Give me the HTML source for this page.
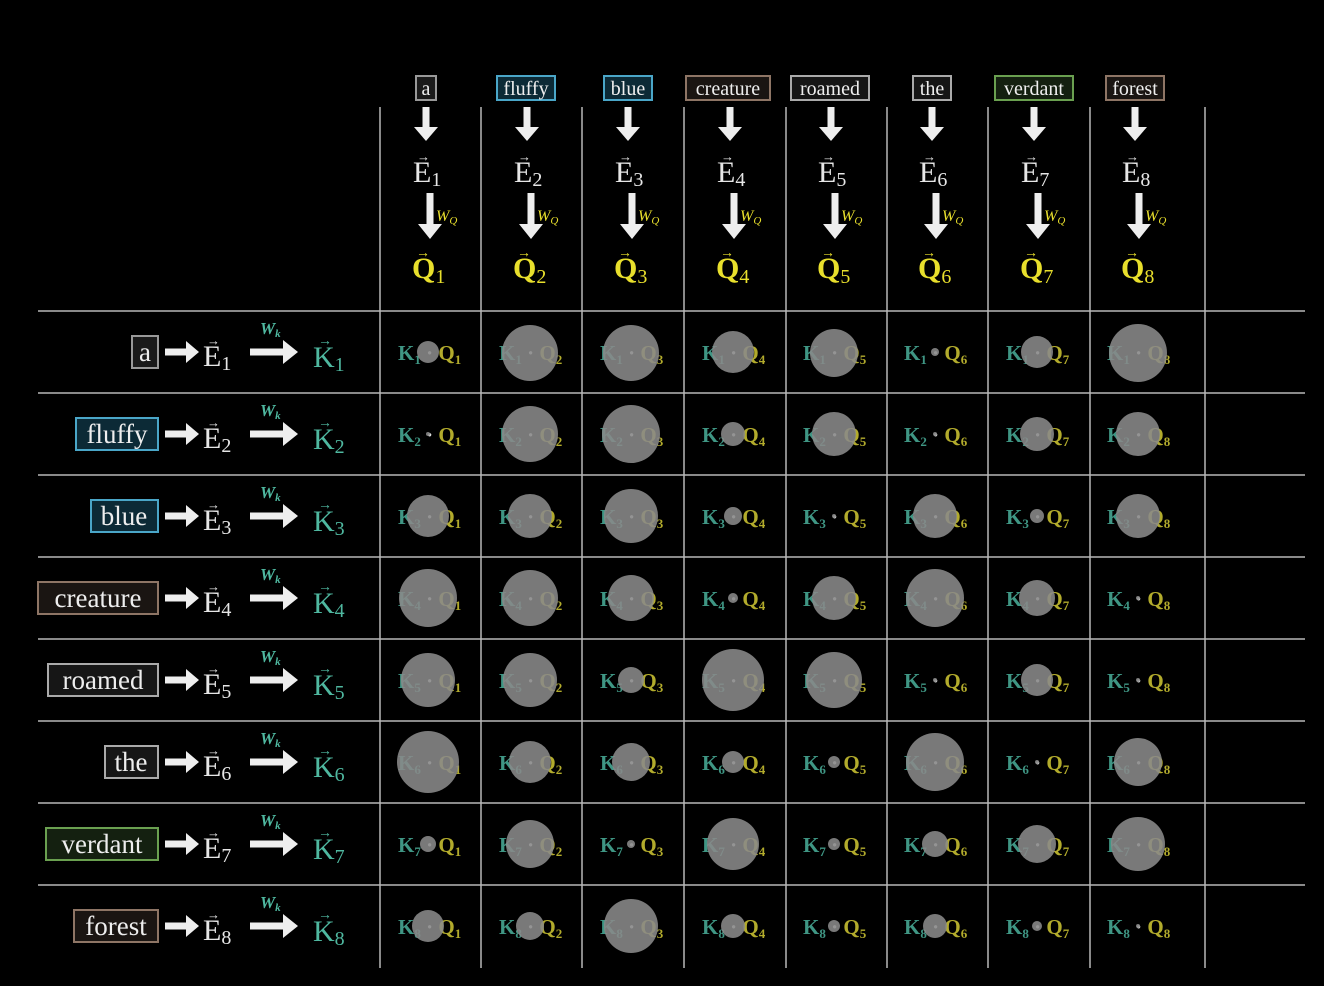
<!DOCTYPE html>
<html><head><meta charset="utf-8"><style>
html,body{margin:0;padding:0;background:#000;}
svg{display:block}
text{font-family:"Liberation Serif",serif;}
.w{fill:#e6e6e6}.y{fill:#e8df2c}.t{fill:#4fb8a0}
.ct{font-size:21px}.ct .k{fill:#3f9684}.ct .q{fill:#b2ab2c}.ct .d{fill:#ddd}
.s{font-size:13px}
.c{fill:#8a8a8a;fill-opacity:.88}
.box{font-size:20px;fill:#eee}
.bw{font-size:27px;fill:#eee}
</style></head><body>
<svg width="1324" height="986" viewBox="0 0 1324 986" xmlns="http://www.w3.org/2000/svg">
<defs>
<path id="da" d="M-3.5 0H3.5V20H12L0 34L-12 20H-3.5Z" fill="#eee"/>
<path id="dl" d="M-3.5 0H3.5V31H12L0 46L-12 31H-3.5Z" fill="#eee"/>
<path id="ra" d="M0 -3.5H21V-11L34 0L21 11V3.5H0Z" fill="#eee"/>
<path id="rl" d="M0 -3.5H33V-12L48 0L33 12V3.5H0Z" fill="#eee"/>
</defs>
<g stroke="#b8b8b8" stroke-width="1.5">
<line x1="380" y1="107" x2="380" y2="968"/><line x1="481" y1="107" x2="481" y2="968"/><line x1="582" y1="107" x2="582" y2="968"/><line x1="684" y1="107" x2="684" y2="968"/><line x1="786" y1="107" x2="786" y2="968"/><line x1="887" y1="107" x2="887" y2="968"/><line x1="988" y1="107" x2="988" y2="968"/><line x1="1090" y1="107" x2="1090" y2="968"/><line x1="1205" y1="107" x2="1205" y2="968"/>
<line x1="38" y1="311" x2="1305" y2="311"/><line x1="38" y1="393" x2="1305" y2="393"/><line x1="38" y1="475" x2="1305" y2="475"/><line x1="38" y1="557" x2="1305" y2="557"/><line x1="38" y1="639" x2="1305" y2="639"/><line x1="38" y1="721" x2="1305" y2="721"/><line x1="38" y1="803" x2="1305" y2="803"/><line x1="38" y1="885" x2="1305" y2="885"/>
</g>
<g stroke-width="2">
<rect x="416" y="76" width="20" height="24" fill="#1a1a1a" stroke="#999"/>
<rect x="497" y="76" width="58" height="24" fill="#0c2a36" stroke="#4aa6c8"/>
<rect x="604" y="76" width="48" height="24" fill="#0c2a36" stroke="#4aa6c8"/>
<rect x="686" y="76" width="84" height="24" fill="#1a1512" stroke="#8e7565"/>
<rect x="791" y="76" width="78" height="24" fill="#161616" stroke="#aaa"/>
<rect x="913" y="76" width="38" height="24" fill="#161616" stroke="#aaa"/>
<rect x="995" y="76" width="78" height="24" fill="#142010" stroke="#6aa050"/>
<rect x="1106" y="76" width="58" height="24" fill="#1a1512" stroke="#8e7565"/>
</g>
<g class="box" text-anchor="middle">
<text x="426" y="95">a</text><text x="526" y="95">fluffy</text><text x="628" y="95">blue</text><text x="728" y="95">creature</text><text x="830" y="95">roamed</text><text x="932" y="95">the</text><text x="1034" y="95">verdant</text><text x="1135" y="95">forest</text>
</g>
<use href="#da" x="426" y="107"/><use href="#da" x="527" y="107"/><use href="#da" x="628" y="107"/><use href="#da" x="730" y="107"/><use href="#da" x="831" y="107"/><use href="#da" x="932" y="107"/><use href="#da" x="1034" y="107"/><use href="#da" x="1135" y="107"/>
<use href="#dl" x="430" y="193"/><use href="#dl" x="531" y="193"/><use href="#dl" x="632" y="193"/><use href="#dl" x="734" y="193"/><use href="#dl" x="835" y="193"/><use href="#dl" x="936" y="193"/><use href="#dl" x="1038" y="193"/><use href="#dl" x="1139" y="193"/>
<g font-size="30" class="w">
<text x="413" y="182">E<tspan font-size="20" dy="4">1</tspan></text>
<text x="514" y="182">E<tspan font-size="20" dy="4">2</tspan></text>
<text x="615" y="182">E<tspan font-size="20" dy="4">3</tspan></text>
<text x="717" y="182">E<tspan font-size="20" dy="4">4</tspan></text>
<text x="818" y="182">E<tspan font-size="20" dy="4">5</tspan></text>
<text x="919" y="182">E<tspan font-size="20" dy="4">6</tspan></text>
<text x="1021" y="182">E<tspan font-size="20" dy="4">7</tspan></text>
<text x="1122" y="182">E<tspan font-size="20" dy="4">8</tspan></text>
</g>
<g font-size="13" class="w">
<text x="417" y="161">→</text><text x="518" y="161">→</text><text x="619" y="161">→</text><text x="721" y="161">→</text><text x="822" y="161">→</text><text x="923" y="161">→</text><text x="1025" y="161">→</text><text x="1126" y="161">→</text>
</g>
<g font-size="16" font-style="italic" class="y">
<text x="436" y="221">W<tspan font-size="11" dy="3">Q</tspan></text>
<text x="537" y="221">W<tspan font-size="11" dy="3">Q</tspan></text>
<text x="638" y="221">W<tspan font-size="11" dy="3">Q</tspan></text>
<text x="740" y="221">W<tspan font-size="11" dy="3">Q</tspan></text>
<text x="841" y="221">W<tspan font-size="11" dy="3">Q</tspan></text>
<text x="942" y="221">W<tspan font-size="11" dy="3">Q</tspan></text>
<text x="1044" y="221">W<tspan font-size="11" dy="3">Q</tspan></text>
<text x="1145" y="221">W<tspan font-size="11" dy="3">Q</tspan></text>
</g>
<g font-size="30" font-weight="bold" class="y">
<text x="412" y="278">Q<tspan font-size="20" font-weight="normal" dy="5">1</tspan></text>
<text x="513" y="278">Q<tspan font-size="20" font-weight="normal" dy="5">2</tspan></text>
<text x="614" y="278">Q<tspan font-size="20" font-weight="normal" dy="5">3</tspan></text>
<text x="716" y="278">Q<tspan font-size="20" font-weight="normal" dy="5">4</tspan></text>
<text x="817" y="278">Q<tspan font-size="20" font-weight="normal" dy="5">5</tspan></text>
<text x="918" y="278">Q<tspan font-size="20" font-weight="normal" dy="5">6</tspan></text>
<text x="1020" y="278">Q<tspan font-size="20" font-weight="normal" dy="5">7</tspan></text>
<text x="1121" y="278">Q<tspan font-size="20" font-weight="normal" dy="5">8</tspan></text>
</g>
<g font-size="14" class="y">
<text x="416" y="257">→</text><text x="517" y="257">→</text><text x="618" y="257">→</text><text x="720" y="257">→</text><text x="821" y="257">→</text><text x="922" y="257">→</text><text x="1024" y="257">→</text><text x="1125" y="257">→</text>
</g>
<g stroke-width="2">
<rect x="132" y="336" width="26" height="32" fill="#1a1a1a" stroke="#999"/>
<rect x="76" y="418" width="82" height="32" fill="#0c2a36" stroke="#4aa6c8"/>
<rect x="91" y="500" width="67" height="32" fill="#0c2a36" stroke="#4aa6c8"/>
<rect x="38" y="582" width="120" height="32" fill="#1a1512" stroke="#8e7565"/>
<rect x="48" y="664" width="110" height="32" fill="#161616" stroke="#aaa"/>
<rect x="105" y="746" width="53" height="32" fill="#161616" stroke="#aaa"/>
<rect x="46" y="828" width="112" height="32" fill="#142010" stroke="#6aa050"/>
<rect x="74" y="910" width="84" height="32" fill="#1a1512" stroke="#8e7565"/>
</g>
<g class="bw" text-anchor="middle">
<text x="145" y="361">a</text><text x="117" y="443">fluffy</text><text x="124" y="525">blue</text><text x="98" y="607">creature</text><text x="103" y="689">roamed</text><text x="131" y="771">the</text><text x="102" y="853">verdant</text><text x="116" y="935">forest</text>
</g>
<use href="#ra" x="165" y="352"/><use href="#ra" x="165" y="434"/><use href="#ra" x="165" y="516"/><use href="#ra" x="165" y="598"/><use href="#ra" x="165" y="680"/><use href="#ra" x="165" y="762"/><use href="#ra" x="165" y="844"/><use href="#ra" x="165" y="926"/>
<use href="#rl" x="250" y="352"/><use href="#rl" x="250" y="434"/><use href="#rl" x="250" y="516"/><use href="#rl" x="250" y="598"/><use href="#rl" x="250" y="680"/><use href="#rl" x="250" y="762"/><use href="#rl" x="250" y="844"/><use href="#rl" x="250" y="926"/>
<g font-size="30" class="w">
<text x="203" y="366">E<tspan font-size="20" dy="4">1</tspan></text>
<text x="203" y="448">E<tspan font-size="20" dy="4">2</tspan></text>
<text x="203" y="530">E<tspan font-size="20" dy="4">3</tspan></text>
<text x="203" y="612">E<tspan font-size="20" dy="4">4</tspan></text>
<text x="203" y="694">E<tspan font-size="20" dy="4">5</tspan></text>
<text x="203" y="776">E<tspan font-size="20" dy="4">6</tspan></text>
<text x="203" y="858">E<tspan font-size="20" dy="4">7</tspan></text>
<text x="203" y="940">E<tspan font-size="20" dy="4">8</tspan></text>
</g>
<g font-size="13" class="w">
<text x="207" y="345">→</text><text x="207" y="427">→</text><text x="207" y="509">→</text><text x="207" y="591">→</text><text x="207" y="673">→</text><text x="207" y="755">→</text><text x="207" y="837">→</text><text x="207" y="919">→</text>
</g>
<g font-size="17" font-style="italic" font-weight="bold" class="t">
<text x="260" y="334">W<tspan font-size="11" dy="3">k</tspan></text>
<text x="260" y="416">W<tspan font-size="11" dy="3">k</tspan></text>
<text x="260" y="498">W<tspan font-size="11" dy="3">k</tspan></text>
<text x="260" y="580">W<tspan font-size="11" dy="3">k</tspan></text>
<text x="260" y="662">W<tspan font-size="11" dy="3">k</tspan></text>
<text x="260" y="744">W<tspan font-size="11" dy="3">k</tspan></text>
<text x="260" y="826">W<tspan font-size="11" dy="3">k</tspan></text>
<text x="260" y="908">W<tspan font-size="11" dy="3">k</tspan></text>
</g>
<g font-size="30" class="t">
<text x="313" y="367">K<tspan font-size="20" dy="4">1</tspan></text>
<text x="313" y="449">K<tspan font-size="20" dy="4">2</tspan></text>
<text x="313" y="531">K<tspan font-size="20" dy="4">3</tspan></text>
<text x="313" y="613">K<tspan font-size="20" dy="4">4</tspan></text>
<text x="313" y="695">K<tspan font-size="20" dy="4">5</tspan></text>
<text x="313" y="777">K<tspan font-size="20" dy="4">6</tspan></text>
<text x="313" y="859">K<tspan font-size="20" dy="4">7</tspan></text>
<text x="313" y="941">K<tspan font-size="20" dy="4">8</tspan></text>
</g>
<g font-size="14" class="t">
<text x="318" y="345">→</text><text x="318" y="427">→</text><text x="318" y="509">→</text><text x="318" y="591">→</text><text x="318" y="673">→</text><text x="318" y="755">→</text><text x="318" y="837">→</text><text x="318" y="919">→</text>
</g>
<g class="ct" font-weight="bold">
<text x="398" y="360"><tspan class="k">K</tspan><tspan class="k s" dy="4">1</tspan><tspan class="d" dy="-4"> · </tspan><tspan class="q">Q</tspan><tspan class="q s" dy="4">1</tspan></text>
<text x="499" y="360"><tspan class="k">K</tspan><tspan class="k s" dy="4">1</tspan><tspan class="d" dy="-4"> · </tspan><tspan class="q">Q</tspan><tspan class="q s" dy="4">2</tspan></text>
<text x="600" y="360"><tspan class="k">K</tspan><tspan class="k s" dy="4">1</tspan><tspan class="d" dy="-4"> · </tspan><tspan class="q">Q</tspan><tspan class="q s" dy="4">3</tspan></text>
<text x="702" y="360"><tspan class="k">K</tspan><tspan class="k s" dy="4">1</tspan><tspan class="d" dy="-4"> · </tspan><tspan class="q">Q</tspan><tspan class="q s" dy="4">4</tspan></text>
<text x="803" y="360"><tspan class="k">K</tspan><tspan class="k s" dy="4">1</tspan><tspan class="d" dy="-4"> · </tspan><tspan class="q">Q</tspan><tspan class="q s" dy="4">5</tspan></text>
<text x="904" y="360"><tspan class="k">K</tspan><tspan class="k s" dy="4">1</tspan><tspan class="d" dy="-4"> · </tspan><tspan class="q">Q</tspan><tspan class="q s" dy="4">6</tspan></text>
<text x="1006" y="360"><tspan class="k">K</tspan><tspan class="k s" dy="4">1</tspan><tspan class="d" dy="-4"> · </tspan><tspan class="q">Q</tspan><tspan class="q s" dy="4">7</tspan></text>
<text x="1107" y="360"><tspan class="k">K</tspan><tspan class="k s" dy="4">1</tspan><tspan class="d" dy="-4"> · </tspan><tspan class="q">Q</tspan><tspan class="q s" dy="4">8</tspan></text>

<text x="398" y="442"><tspan class="k">K</tspan><tspan class="k s" dy="4">2</tspan><tspan class="d" dy="-4"> · </tspan><tspan class="q">Q</tspan><tspan class="q s" dy="4">1</tspan></text>
<text x="499" y="442"><tspan class="k">K</tspan><tspan class="k s" dy="4">2</tspan><tspan class="d" dy="-4"> · </tspan><tspan class="q">Q</tspan><tspan class="q s" dy="4">2</tspan></text>
<text x="600" y="442"><tspan class="k">K</tspan><tspan class="k s" dy="4">2</tspan><tspan class="d" dy="-4"> · </tspan><tspan class="q">Q</tspan><tspan class="q s" dy="4">3</tspan></text>
<text x="702" y="442"><tspan class="k">K</tspan><tspan class="k s" dy="4">2</tspan><tspan class="d" dy="-4"> · </tspan><tspan class="q">Q</tspan><tspan class="q s" dy="4">4</tspan></text>
<text x="803" y="442"><tspan class="k">K</tspan><tspan class="k s" dy="4">2</tspan><tspan class="d" dy="-4"> · </tspan><tspan class="q">Q</tspan><tspan class="q s" dy="4">5</tspan></text>
<text x="904" y="442"><tspan class="k">K</tspan><tspan class="k s" dy="4">2</tspan><tspan class="d" dy="-4"> · </tspan><tspan class="q">Q</tspan><tspan class="q s" dy="4">6</tspan></text>
<text x="1006" y="442"><tspan class="k">K</tspan><tspan class="k s" dy="4">2</tspan><tspan class="d" dy="-4"> · </tspan><tspan class="q">Q</tspan><tspan class="q s" dy="4">7</tspan></text>
<text x="1107" y="442"><tspan class="k">K</tspan><tspan class="k s" dy="4">2</tspan><tspan class="d" dy="-4"> · </tspan><tspan class="q">Q</tspan><tspan class="q s" dy="4">8</tspan></text>

<text x="398" y="524"><tspan class="k">K</tspan><tspan class="k s" dy="4">3</tspan><tspan class="d" dy="-4"> · </tspan><tspan class="q">Q</tspan><tspan class="q s" dy="4">1</tspan></text>
<text x="499" y="524"><tspan class="k">K</tspan><tspan class="k s" dy="4">3</tspan><tspan class="d" dy="-4"> · </tspan><tspan class="q">Q</tspan><tspan class="q s" dy="4">2</tspan></text>
<text x="600" y="524"><tspan class="k">K</tspan><tspan class="k s" dy="4">3</tspan><tspan class="d" dy="-4"> · </tspan><tspan class="q">Q</tspan><tspan class="q s" dy="4">3</tspan></text>
<text x="702" y="524"><tspan class="k">K</tspan><tspan class="k s" dy="4">3</tspan><tspan class="d" dy="-4"> · </tspan><tspan class="q">Q</tspan><tspan class="q s" dy="4">4</tspan></text>
<text x="803" y="524"><tspan class="k">K</tspan><tspan class="k s" dy="4">3</tspan><tspan class="d" dy="-4"> · </tspan><tspan class="q">Q</tspan><tspan class="q s" dy="4">5</tspan></text>
<text x="904" y="524"><tspan class="k">K</tspan><tspan class="k s" dy="4">3</tspan><tspan class="d" dy="-4"> · </tspan><tspan class="q">Q</tspan><tspan class="q s" dy="4">6</tspan></text>
<text x="1006" y="524"><tspan class="k">K</tspan><tspan class="k s" dy="4">3</tspan><tspan class="d" dy="-4"> · </tspan><tspan class="q">Q</tspan><tspan class="q s" dy="4">7</tspan></text>
<text x="1107" y="524"><tspan class="k">K</tspan><tspan class="k s" dy="4">3</tspan><tspan class="d" dy="-4"> · </tspan><tspan class="q">Q</tspan><tspan class="q s" dy="4">8</tspan></text>

<text x="398" y="606"><tspan class="k">K</tspan><tspan class="k s" dy="4">4</tspan><tspan class="d" dy="-4"> · </tspan><tspan class="q">Q</tspan><tspan class="q s" dy="4">1</tspan></text>
<text x="499" y="606"><tspan class="k">K</tspan><tspan class="k s" dy="4">4</tspan><tspan class="d" dy="-4"> · </tspan><tspan class="q">Q</tspan><tspan class="q s" dy="4">2</tspan></text>
<text x="600" y="606"><tspan class="k">K</tspan><tspan class="k s" dy="4">4</tspan><tspan class="d" dy="-4"> · </tspan><tspan class="q">Q</tspan><tspan class="q s" dy="4">3</tspan></text>
<text x="702" y="606"><tspan class="k">K</tspan><tspan class="k s" dy="4">4</tspan><tspan class="d" dy="-4"> · </tspan><tspan class="q">Q</tspan><tspan class="q s" dy="4">4</tspan></text>
<text x="803" y="606"><tspan class="k">K</tspan><tspan class="k s" dy="4">4</tspan><tspan class="d" dy="-4"> · </tspan><tspan class="q">Q</tspan><tspan class="q s" dy="4">5</tspan></text>
<text x="904" y="606"><tspan class="k">K</tspan><tspan class="k s" dy="4">4</tspan><tspan class="d" dy="-4"> · </tspan><tspan class="q">Q</tspan><tspan class="q s" dy="4">6</tspan></text>
<text x="1006" y="606"><tspan class="k">K</tspan><tspan class="k s" dy="4">4</tspan><tspan class="d" dy="-4"> · </tspan><tspan class="q">Q</tspan><tspan class="q s" dy="4">7</tspan></text>
<text x="1107" y="606"><tspan class="k">K</tspan><tspan class="k s" dy="4">4</tspan><tspan class="d" dy="-4"> · </tspan><tspan class="q">Q</tspan><tspan class="q s" dy="4">8</tspan></text>

<text x="398" y="688"><tspan class="k">K</tspan><tspan class="k s" dy="4">5</tspan><tspan class="d" dy="-4"> · </tspan><tspan class="q">Q</tspan><tspan class="q s" dy="4">1</tspan></text>
<text x="499" y="688"><tspan class="k">K</tspan><tspan class="k s" dy="4">5</tspan><tspan class="d" dy="-4"> · </tspan><tspan class="q">Q</tspan><tspan class="q s" dy="4">2</tspan></text>
<text x="600" y="688"><tspan class="k">K</tspan><tspan class="k s" dy="4">5</tspan><tspan class="d" dy="-4"> · </tspan><tspan class="q">Q</tspan><tspan class="q s" dy="4">3</tspan></text>
<text x="702" y="688"><tspan class="k">K</tspan><tspan class="k s" dy="4">5</tspan><tspan class="d" dy="-4"> · </tspan><tspan class="q">Q</tspan><tspan class="q s" dy="4">4</tspan></text>
<text x="803" y="688"><tspan class="k">K</tspan><tspan class="k s" dy="4">5</tspan><tspan class="d" dy="-4"> · </tspan><tspan class="q">Q</tspan><tspan class="q s" dy="4">5</tspan></text>
<text x="904" y="688"><tspan class="k">K</tspan><tspan class="k s" dy="4">5</tspan><tspan class="d" dy="-4"> · </tspan><tspan class="q">Q</tspan><tspan class="q s" dy="4">6</tspan></text>
<text x="1006" y="688"><tspan class="k">K</tspan><tspan class="k s" dy="4">5</tspan><tspan class="d" dy="-4"> · </tspan><tspan class="q">Q</tspan><tspan class="q s" dy="4">7</tspan></text>
<text x="1107" y="688"><tspan class="k">K</tspan><tspan class="k s" dy="4">5</tspan><tspan class="d" dy="-4"> · </tspan><tspan class="q">Q</tspan><tspan class="q s" dy="4">8</tspan></text>

<text x="398" y="770"><tspan class="k">K</tspan><tspan class="k s" dy="4">6</tspan><tspan class="d" dy="-4"> · </tspan><tspan class="q">Q</tspan><tspan class="q s" dy="4">1</tspan></text>
<text x="499" y="770"><tspan class="k">K</tspan><tspan class="k s" dy="4">6</tspan><tspan class="d" dy="-4"> · </tspan><tspan class="q">Q</tspan><tspan class="q s" dy="4">2</tspan></text>
<text x="600" y="770"><tspan class="k">K</tspan><tspan class="k s" dy="4">6</tspan><tspan class="d" dy="-4"> · </tspan><tspan class="q">Q</tspan><tspan class="q s" dy="4">3</tspan></text>
<text x="702" y="770"><tspan class="k">K</tspan><tspan class="k s" dy="4">6</tspan><tspan class="d" dy="-4"> · </tspan><tspan class="q">Q</tspan><tspan class="q s" dy="4">4</tspan></text>
<text x="803" y="770"><tspan class="k">K</tspan><tspan class="k s" dy="4">6</tspan><tspan class="d" dy="-4"> · </tspan><tspan class="q">Q</tspan><tspan class="q s" dy="4">5</tspan></text>
<text x="904" y="770"><tspan class="k">K</tspan><tspan class="k s" dy="4">6</tspan><tspan class="d" dy="-4"> · </tspan><tspan class="q">Q</tspan><tspan class="q s" dy="4">6</tspan></text>
<text x="1006" y="770"><tspan class="k">K</tspan><tspan class="k s" dy="4">6</tspan><tspan class="d" dy="-4"> · </tspan><tspan class="q">Q</tspan><tspan class="q s" dy="4">7</tspan></text>
<text x="1107" y="770"><tspan class="k">K</tspan><tspan class="k s" dy="4">6</tspan><tspan class="d" dy="-4"> · </tspan><tspan class="q">Q</tspan><tspan class="q s" dy="4">8</tspan></text>

<text x="398" y="852"><tspan class="k">K</tspan><tspan class="k s" dy="4">7</tspan><tspan class="d" dy="-4"> · </tspan><tspan class="q">Q</tspan><tspan class="q s" dy="4">1</tspan></text>
<text x="499" y="852"><tspan class="k">K</tspan><tspan class="k s" dy="4">7</tspan><tspan class="d" dy="-4"> · </tspan><tspan class="q">Q</tspan><tspan class="q s" dy="4">2</tspan></text>
<text x="600" y="852"><tspan class="k">K</tspan><tspan class="k s" dy="4">7</tspan><tspan class="d" dy="-4"> · </tspan><tspan class="q">Q</tspan><tspan class="q s" dy="4">3</tspan></text>
<text x="702" y="852"><tspan class="k">K</tspan><tspan class="k s" dy="4">7</tspan><tspan class="d" dy="-4"> · </tspan><tspan class="q">Q</tspan><tspan class="q s" dy="4">4</tspan></text>
<text x="803" y="852"><tspan class="k">K</tspan><tspan class="k s" dy="4">7</tspan><tspan class="d" dy="-4"> · </tspan><tspan class="q">Q</tspan><tspan class="q s" dy="4">5</tspan></text>
<text x="904" y="852"><tspan class="k">K</tspan><tspan class="k s" dy="4">7</tspan><tspan class="d" dy="-4"> · </tspan><tspan class="q">Q</tspan><tspan class="q s" dy="4">6</tspan></text>
<text x="1006" y="852"><tspan class="k">K</tspan><tspan class="k s" dy="4">7</tspan><tspan class="d" dy="-4"> · </tspan><tspan class="q">Q</tspan><tspan class="q s" dy="4">7</tspan></text>
<text x="1107" y="852"><tspan class="k">K</tspan><tspan class="k s" dy="4">7</tspan><tspan class="d" dy="-4"> · </tspan><tspan class="q">Q</tspan><tspan class="q s" dy="4">8</tspan></text>

<text x="398" y="934"><tspan class="k">K</tspan><tspan class="k s" dy="4">8</tspan><tspan class="d" dy="-4"> · </tspan><tspan class="q">Q</tspan><tspan class="q s" dy="4">1</tspan></text>
<text x="499" y="934"><tspan class="k">K</tspan><tspan class="k s" dy="4">8</tspan><tspan class="d" dy="-4"> · </tspan><tspan class="q">Q</tspan><tspan class="q s" dy="4">2</tspan></text>
<text x="600" y="934"><tspan class="k">K</tspan><tspan class="k s" dy="4">8</tspan><tspan class="d" dy="-4"> · </tspan><tspan class="q">Q</tspan><tspan class="q s" dy="4">3</tspan></text>
<text x="702" y="934"><tspan class="k">K</tspan><tspan class="k s" dy="4">8</tspan><tspan class="d" dy="-4"> · </tspan><tspan class="q">Q</tspan><tspan class="q s" dy="4">4</tspan></text>
<text x="803" y="934"><tspan class="k">K</tspan><tspan class="k s" dy="4">8</tspan><tspan class="d" dy="-4"> · </tspan><tspan class="q">Q</tspan><tspan class="q s" dy="4">5</tspan></text>
<text x="904" y="934"><tspan class="k">K</tspan><tspan class="k s" dy="4">8</tspan><tspan class="d" dy="-4"> · </tspan><tspan class="q">Q</tspan><tspan class="q s" dy="4">6</tspan></text>
<text x="1006" y="934"><tspan class="k">K</tspan><tspan class="k s" dy="4">8</tspan><tspan class="d" dy="-4"> · </tspan><tspan class="q">Q</tspan><tspan class="q s" dy="4">7</tspan></text>
<text x="1107" y="934"><tspan class="k">K</tspan><tspan class="k s" dy="4">8</tspan><tspan class="d" dy="-4"> · </tspan><tspan class="q">Q</tspan><tspan class="q s" dy="4">8</tspan></text>
</g>
<g class="c">
<circle cx="428" cy="352" r="11"/><circle cx="530" cy="353" r="28"/><circle cx="631" cy="353" r="28"/><circle cx="733" cy="352" r="21"/><circle cx="834" cy="353" r="24"/><circle cx="935" cy="352" r="4"/><circle cx="1037" cy="352" r="16"/><circle cx="1138" cy="353" r="29"/>
<circle cx="428" cy="434" r="2"/><circle cx="530" cy="434" r="28"/><circle cx="631" cy="434" r="29"/><circle cx="733" cy="434" r="12"/><circle cx="834" cy="434" r="22"/><circle cx="935" cy="434" r="2"/><circle cx="1037" cy="434" r="17"/><circle cx="1138" cy="434" r="22"/>
<circle cx="428" cy="516" r="21"/><circle cx="530" cy="516" r="22"/><circle cx="631" cy="516" r="27"/><circle cx="733" cy="516" r="9"/><circle cx="834" cy="516" r="2"/><circle cx="935" cy="516" r="22"/><circle cx="1037" cy="516" r="7"/><circle cx="1138" cy="516" r="22"/>
<circle cx="428" cy="598" r="29"/><circle cx="530" cy="598" r="28"/><circle cx="631" cy="598" r="23"/><circle cx="733" cy="598" r="5"/><circle cx="834" cy="598" r="22"/><circle cx="935" cy="598" r="29"/><circle cx="1037" cy="598" r="18"/><circle cx="1138" cy="598" r="2"/>
<circle cx="428" cy="680" r="27"/><circle cx="530" cy="680" r="27"/><circle cx="631" cy="680" r="13"/><circle cx="733" cy="680" r="31"/><circle cx="834" cy="680" r="28"/><circle cx="935" cy="680" r="2"/><circle cx="1037" cy="680" r="16"/><circle cx="1138" cy="680" r="2"/>
<circle cx="428" cy="762" r="31"/><circle cx="530" cy="762" r="21"/><circle cx="631" cy="762" r="19"/><circle cx="733" cy="762" r="11"/><circle cx="834" cy="762" r="6"/><circle cx="935" cy="762" r="29"/><circle cx="1037" cy="762" r="2"/><circle cx="1138" cy="762" r="24"/>
<circle cx="428" cy="844" r="8"/><circle cx="530" cy="844" r="24"/><circle cx="631" cy="844" r="4"/><circle cx="733" cy="844" r="26"/><circle cx="834" cy="844" r="6"/><circle cx="935" cy="844" r="13"/><circle cx="1037" cy="844" r="19"/><circle cx="1138" cy="844" r="27"/>
<circle cx="428" cy="926" r="16"/><circle cx="530" cy="926" r="14"/><circle cx="631" cy="926" r="27"/><circle cx="733" cy="926" r="12"/><circle cx="834" cy="926" r="6"/><circle cx="935" cy="926" r="12"/><circle cx="1037" cy="926" r="5"/><circle cx="1138" cy="926" r="2"/>
</g>
</svg>
</body></html>
